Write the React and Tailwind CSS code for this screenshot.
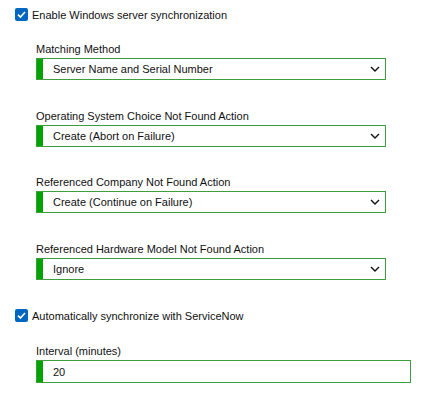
import { useState } from "react";

const Check = ({ checked, onChange, label }) => (
  <label className="flex items-center h-[13px] cursor-pointer select-none">
    <span
      className="flex items-center justify-center w-[13px] h-[13px] rounded-[2px] bg-[#0067c0]"
      onClick={onChange}
    >
      {checked && (
        <svg width="11" height="11" viewBox="0 0 11 11">
          <path d="M2 5.6 L4.4 8 L9 3" fill="none" stroke="white" strokeWidth="1.6" />
        </svg>
      )}
    </span>
    <span className="ml-[4px] leading-[14px]">{label}</span>
  </label>
);

const Field = ({ label, value, className }) => (
  <div className={className}>
    <div className="leading-[14px] mb-[2px]">{label}</div>
    <div className="flex items-center w-[350px] h-[22px] border border-[#3c9e3c] bg-white">
      <span className="w-[6px] h-full bg-[#00a400]" />
      <span className="ml-[10px] flex-1 leading-[14px]">{value}</span>
      <svg width="10" height="6" viewBox="0 0 10 6" className="mr-[5px]">
        <path d="M1 1 L5 5 L9 1" fill="none" stroke="#111" strokeWidth="1.4" />
      </svg>
    </div>
  </div>
);

export default function App() {
  const [winSync, setWinSync] = useState(true);
  const [autoSync, setAutoSync] = useState(true);

  return (
    <div className="w-[424px] h-[400px] bg-white pl-[15px] pt-[8px] font-['Liberation_Sans',Arial,sans-serif] text-[11px] text-[#111]">
      <Check checked={winSync} onChange={() => setWinSync(!winSync)} label="Enable Windows server synchronization" />

      <div className="pl-[21px]">
        <Field className="mt-[21px]" label="Matching Method" value="Server Name and Serial Number" />
        <Field className="mt-[29px]" label="Operating System Choice Not Found Action" value="Create (Abort on Failure)" />
        <Field className="mt-[28px]" label="Referenced Company Not Found Action" value="Create (Continue on Failure)" />
        <Field className="mt-[29px]" label="Referenced Hardware Model Not Found Action" value="Ignore" />
      </div>

      <div className="mt-[29px]">
        <Check checked={autoSync} onChange={() => setAutoSync(!autoSync)} label="Automatically synchronize with ServiceNow" />
      </div>

      <div className="pl-[21px] mt-[22px]">
        <div className="leading-[14px] mb-[2px]">Interval (minutes)</div>
        <div className="flex items-center w-[375px] h-[23px] border border-[#3c9e3c] bg-white">
          <span className="w-[6px] h-full bg-[#00a400]" />
          <span className="ml-[10px] leading-[14px]">20</span>
        </div>
      </div>
    </div>
  );
}
